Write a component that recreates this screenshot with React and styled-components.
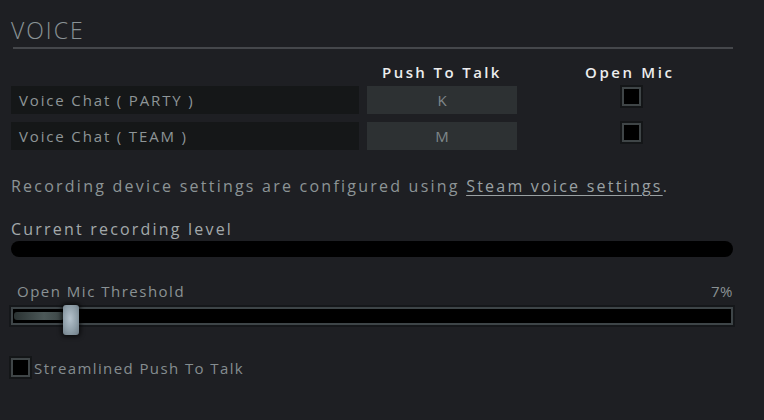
import React from "react";
import styled, { createGlobalStyle } from "styled-components";

const Global = createGlobalStyle`
  html, body { margin: 0; padding: 0; background: #1e1f23; }
  body { font-family: "Open Sans", "Noto Sans", sans-serif; }
  * { box-sizing: border-box; }
`;

const Page = styled.div`
  width: 764px;
  height: 420px;
  background: #1e1f23;
  padding: 15px 31px 0 11px;
  display: flex;
  flex-direction: column;
`;

const Title = styled.div`
  font-weight: 300;
  font-size: 23px;
  letter-spacing: 2px;
  color: #8a9396;
  line-height: 30px;
`;

const Divider = styled.div`
  height: 2px;
  background: #45474b;
  margin: 2px 0 0 2px;
`;

const Grid = styled.div`
  display: grid;
  grid-template-columns: 348px 150px 224px;
  column-gap: 8px;
  row-gap: 8px;
  margin-top: 13px;
  align-items: center;
`;

const Header = styled.div`
  font-weight: 600;
  font-size: 15px;
  letter-spacing: ${(p) => p.$ls || 2}px;
  color: #ecedee;
  text-align: ${(p) => (p.$left ? "left" : "center")};
  padding-left: ${(p) => p.$indent || 0}px;
  line-height: 20px;
  margin-bottom: -4px;
`;

const LabelCell = styled.div`
  height: 28px;
  background: #151718;
  color: #8e9597;
  font-weight: 500;
  font-size: 15px;
  letter-spacing: 1.85px;
  line-height: 28px;
  padding-left: 8px;
`;

const KeyCell = styled.div`
  height: 28px;
  background: #2d3133;
  color: #7f878a;
  font-weight: 500;
  font-size: 15px;
  line-height: 28px;
  text-align: center;
`;

const CheckCell = styled.div`
  display: flex;
  padding-left: 95px;
  margin-top: ${(p) => p.$offset || 0}px;
`;

const Box = styled.div`
  width: 23px;
  height: 23px;
  background: #141618;
  padding: 2px;
  flex: none;
`;

const BoxInner = styled.div`
  width: 100%;
  height: 100%;
  border: 2px solid #3f4547;
  background: #000;
`;

const Info = styled.div`
  margin-top: 25px;
  font-size: 16px;
  letter-spacing: 2.23px;
  color: #8c9496;
  line-height: 22px;
  white-space: nowrap;
  a {
    color: #9aa1a3;
    text-decoration: underline;
    text-underline-offset: 3px;
  }
`;

const LevelLabel = styled.div`
  margin-top: 21px;
  font-size: 16px;
  letter-spacing: 2.2px;
  color: #a3a9ab;
  line-height: 22px;
`;

const LevelBar = styled.div`
  margin-top: 1px;
  height: 16px;
  background: #000;
  border-radius: 8px;
`;

const SliderHead = styled.div`
  margin-top: 24px;
  display: flex;
  justify-content: space-between;
  padding-left: 6px;
  font-size: 15px;
  letter-spacing: 1.5px;
  color: #8a9294;
  line-height: 20px;
`;

const Pct = styled.span`
  letter-spacing: 0.5px;
`;

const Track = styled.div`
  margin: 4px -2px 0 -2px;
  height: 22px;
  background: #15171a;
  padding: 2px;
`;

const TrackInner = styled.div`
  height: 100%;
  border: 2px solid #3e4548;
  background: #000;
  position: relative;
`;

const Fill = styled.div`
  position: absolute;
  left: 1px;
  top: 3px;
  bottom: 3px;
  border-radius: 3px;
  background: linear-gradient(to right, #2a3232, #4c5858 60%, #3a4444);
`;

const Thumb = styled.div`
  position: absolute;
  top: -4px;
  width: 16px;
  height: 30px;
  border-radius: 3px;
  background: radial-gradient(ellipse at 45% 45%, #b4c2cc 0%, #8e9ea8 55%, #6c7a84 100%);
  box-shadow: 0 0 4px 2px rgba(0, 0, 0, 0.6);
`;

const CheckRow = styled.div`
  margin-top: 29px;
  margin-left: -2px;
  display: flex;
  align-items: center;
  gap: 2px;
  font-size: 15px;
  letter-spacing: 1.4px;
  color: #858d90;
`;

const Check = () => (
  <Box>
    <BoxInner />
  </Box>
);

export default function App() {
  const threshold = 7;
  const thumbLeft = 50;
  return (
    <>
      <Global />
      <Page>
        <Title>VOICE</Title>
        <Divider />
        <Grid>
          <div />
          <Header $ls={2.4}>Push To Talk</Header>
          <Header $left $indent={60} $ls={2.6}>
            Open Mic
          </Header>
          <LabelCell>Voice Chat ( PARTY )</LabelCell>
          <KeyCell>K</KeyCell>
          <CheckCell $offset={-7}>
            <Check />
          </CheckCell>
          <LabelCell>Voice Chat ( TEAM )</LabelCell>
          <KeyCell>M</KeyCell>
          <CheckCell $offset={-7}>
            <Check />
          </CheckCell>
        </Grid>
        <Info>
          Recording device settings are configured using{" "}
          <a>Steam voice settings</a>.
        </Info>
        <LevelLabel>Current recording level</LevelLabel>
        <LevelBar />
        <SliderHead>
          <span>Open Mic Threshold</span>
          <Pct>{threshold}%</Pct>
        </SliderHead>
        <Track>
          <TrackInner>
            <Fill style={{ width: thumbLeft }} />
            <Thumb style={{ left: thumbLeft }} />
          </TrackInner>
        </Track>
        <CheckRow>
          <Check />
          <span>Streamlined Push To Talk</span>
        </CheckRow>
      </Page>
    </>
  );
}
